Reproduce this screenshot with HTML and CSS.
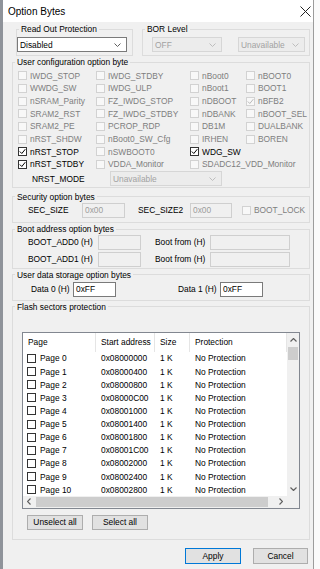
FILE: index.html
```html
<!DOCTYPE html>
<html lang="en">
<head>
  <meta charset="UTF-8" />
  <meta name="viewport" content="width=device-width, initial-scale=1" />
  <title>Option Bytes</title>
  <link rel="stylesheet" href="styles.css">
</head>
<body>
  <div class="screen">
    <div class="edge-left"></div>
    <div class="dialog">
      <div class="titlebar">
        <span class="title">Option Bytes</span>
        <svg class="close" width="11" height="11" viewBox="0 0 11 11">
          <path d="M0.5 0.5 L10.5 10.5 M10.5 0.5 L0.5 10.5" stroke="#222" stroke-width="1" fill="none" />
        </svg>
      </div>

      <div class="content">
        <div class="row-top">
          <fieldset class="grp grp-rop">
            <legend>Read Out Protection</legend>
            <div class="grp-body">
              <div class="combo w-rop">Disabled
                <svg class="chev" width="7" height="4" viewBox="0 0 7 4"><polyline points="0.5,0.5 3.5,3.5 6.5,0.5" /></svg>
              </div>
            </div>
          </fieldset>
          <fieldset class="grp grp-bor">
            <legend>BOR Level</legend>
            <div class="grp-body bor-body">
              <div class="combo off w-off">OFF
                <svg class="chev" width="7" height="4" viewBox="0 0 7 4"><polyline points="0.5,0.5 3.5,3.5 6.5,0.5" /></svg>
              </div>
              <div class="combo off w-unav">Unavailable
                <svg class="chev" width="7" height="4" viewBox="0 0 7 4"><polyline points="0.5,0.5 3.5,3.5 6.5,0.5" /></svg>
              </div>
            </div>
          </fieldset>
        </div>

        <fieldset class="grp grp-user">
          <legend>User configuration option byte</legend>
          <div class="grp-body user-body">
            <div class="opts">
              <div class="opt"><span class="cb"></span>IWDG_STOP</div>
              <div class="opt"><span class="cb"></span>IWDG_STDBY</div>
              <div class="opt"><span class="cb"></span>nBoot0</div>
              <div class="opt"><span class="cb"></span>nBOOT0</div>

              <div class="opt"><span class="cb"></span>WWDG_SW</div>
              <div class="opt"><span class="cb"></span>IWDG_ULP</div>
              <div class="opt"><span class="cb"></span>nBoot1</div>
              <div class="opt"><span class="cb"></span>BOOT1</div>

              <div class="opt"><span class="cb"></span>nSRAM_Parity</div>
              <div class="opt"><span class="cb"></span>FZ_IWDG_STOP</div>
              <div class="opt"><span class="cb"></span>nDBOOT</div>
              <div class="opt"><span class="cb dim"><svg width="7" height="7" viewBox="0 0 7 7"><polyline points="0.8,3.5 2.8,5.5 6.3,1.2" /></svg></span>nBFB2</div>

              <div class="opt"><span class="cb"></span>SRAM2_RST</div>
              <div class="opt"><span class="cb"></span>FZ_IWDG_STDBY</div>
              <div class="opt"><span class="cb"></span>nDBANK</div>
              <div class="opt"><span class="cb"></span>nBOOT_SEL</div>

              <div class="opt"><span class="cb"></span>SRAM2_PE</div>
              <div class="opt"><span class="cb"></span>PCROP_RDP</div>
              <div class="opt"><span class="cb"></span>DB1M</div>
              <div class="opt"><span class="cb"></span>DUALBANK</div>

              <div class="opt"><span class="cb"></span>nRST_SHDW</div>
              <div class="opt"><span class="cb"></span>nBoot0_SW_Cfg</div>
              <div class="opt"><span class="cb"></span>IRHEN</div>
              <div class="opt"><span class="cb"></span>BOREN</div>

              <div class="opt on"><span class="cb on"><svg width="7" height="7" viewBox="0 0 7 7"><polyline points="0.8,3.5 2.8,5.5 6.3,1.2" /></svg></span>nRST_STOP</div>
              <div class="opt"><span class="cb"></span>nSWBOOT0</div>
              <div class="opt on"><span class="cb on"><svg width="7" height="7" viewBox="0 0 7 7"><polyline points="0.8,3.5 2.8,5.5 6.3,1.2" /></svg></span>WDG_SW</div>
              <div class="opt"></div>

              <div class="opt on"><span class="cb on"><svg width="7" height="7" viewBox="0 0 7 7"><polyline points="0.8,3.5 2.8,5.5 6.3,1.2" /></svg></span>nRST_STDBY</div>
              <div class="opt"><span class="cb"></span>VDDA_Monitor</div>
              <div class="opt"><span class="cb"></span>SDADC12_VDD_Monitor</div>
              <div class="opt"></div>
            </div>
            <div class="nrst-row">
              <span class="nrst-label">NRST_MODE</span>
              <div class="combo off w-nrst">Unavailable
                <svg class="chev" width="7" height="4" viewBox="0 0 7 4"><polyline points="0.5,0.5 3.5,3.5 6.5,0.5" /></svg>
              </div>
            </div>
          </div>
        </fieldset>

        <fieldset class="grp grp-sec">
          <legend>Security option bytes</legend>
          <div class="grp-body sec-body">
            <span class="lbl w-sec">SEC_SIZE</span>
            <div class="field off w-43">0x00</div>
            <span class="lbl w-sec2">SEC_SIZE2</span>
            <div class="field off w-42">0x00</div>
            <div class="opt lock"><span class="cb"></span>BOOT_LOCK</div>
          </div>
        </fieldset>

        <fieldset class="grp grp-boot">
          <legend>Boot address option bytes</legend>
          <div class="grp-body boot-body">
            <div class="boot-row">
              <span class="lbl w-add">BOOT_ADD0 (H)</span>
              <div class="field off w-43"></div>
              <span class="lbl w-from">Boot from (H)</span>
              <div class="field off w-80"></div>
            </div>
            <div class="boot-row">
              <span class="lbl w-add">BOOT_ADD1 (H)</span>
              <div class="field off w-43"></div>
              <span class="lbl w-from">Boot from (H)</span>
              <div class="field off w-80"></div>
            </div>
          </div>
        </fieldset>

        <fieldset class="grp grp-data">
          <legend>User data storage option bytes</legend>
          <div class="grp-body data-body">
            <span class="lbl w-data">Data 0 (H)</span>
            <div class="field w-43">0xFF</div>
            <span class="lbl w-data gap-data">Data 1 (H)</span>
            <div class="field w-43">0xFF</div>
          </div>
        </fieldset>

        <fieldset class="grp grp-flash">
          <legend>Flash sectors protection</legend>
          <div class="grp-body flash-body">
            <div class="listview">
              <div class="lv-main">
                <div class="lv-head">
                  <div>Page</div>
                  <div>Start address</div>
                  <div>Size</div>
                  <div>Protection</div>
                </div>
                <div class="lv-rows">
                  <div class="lv-row"><div class="pg"><span class="cb on"></span>Page 0</div><div>0x08000000</div><div>1 K</div><div>No Protection</div></div>
                  <div class="lv-row"><div class="pg"><span class="cb on"></span>Page 1</div><div>0x08000400</div><div>1 K</div><div>No Protection</div></div>
                  <div class="lv-row"><div class="pg"><span class="cb on"></span>Page 2</div><div>0x08000800</div><div>1 K</div><div>No Protection</div></div>
                  <div class="lv-row"><div class="pg"><span class="cb on"></span>Page 3</div><div>0x08000C00</div><div>1 K</div><div>No Protection</div></div>
                  <div class="lv-row"><div class="pg"><span class="cb on"></span>Page 4</div><div>0x08001000</div><div>1 K</div><div>No Protection</div></div>
                  <div class="lv-row"><div class="pg"><span class="cb on"></span>Page 5</div><div>0x08001400</div><div>1 K</div><div>No Protection</div></div>
                  <div class="lv-row"><div class="pg"><span class="cb on"></span>Page 6</div><div>0x08001800</div><div>1 K</div><div>No Protection</div></div>
                  <div class="lv-row"><div class="pg"><span class="cb on"></span>Page 7</div><div>0x08001C00</div><div>1 K</div><div>No Protection</div></div>
                  <div class="lv-row"><div class="pg"><span class="cb on"></span>Page 8</div><div>0x08002000</div><div>1 K</div><div>No Protection</div></div>
                  <div class="lv-row"><div class="pg"><span class="cb on"></span>Page 9</div><div>0x08002400</div><div>1 K</div><div>No Protection</div></div>
                  <div class="lv-row"><div class="pg"><span class="cb on"></span>Page 10</div><div>0x08002800</div><div>1 K</div><div>No Protection</div></div>
                </div>
              </div>
              <div class="vscroll">
                <div class="sb-btn"><svg width="7" height="4" viewBox="0 0 7 4"><polyline points="0.5,3.5 3.5,0.5 6.5,3.5" /></svg></div>
                <div class="v-thumb"></div>
                <div class="sb-fill"></div>
                <div class="sb-btn"><svg width="7" height="4" viewBox="0 0 7 4"><polyline points="0.5,0.5 3.5,3.5 6.5,0.5" /></svg></div>
              </div>
              <div class="hscroll">
                <div class="sb-btn"><svg width="4" height="7" viewBox="0 0 4 7"><polyline points="3.5,0.5 0.5,3.5 3.5,6.5" /></svg></div>
                <div class="h-track"><div class="h-thumb"></div></div>
                <div class="sb-btn"><svg width="4" height="7" viewBox="0 0 4 7"><polyline points="0.5,0.5 3.5,3.5 0.5,6.5" /></svg></div>
              </div>
              <div class="sb-corner"></div>
            </div>
            <div class="sel-row">
              <div class="btn">Unselect all</div>
              <div class="btn">Select all</div>
            </div>
          </div>
        </fieldset>

        <div class="actions">
          <div class="btn btn-main default">Apply</div>
          <div class="btn btn-main">Cancel</div>
        </div>
      </div>
    </div>
    <div class="edge-right"></div>
  </div>
</body>
</html>
```

FILE: styles.css
```css
* {
  box-sizing: border-box;
}

html, body {
  margin: 0;
  padding: 0;
}

body {
  width: 320px;
  height: 569px;
  overflow: hidden;
  font-family: "Liberation Sans", Arial, sans-serif;
  font-size: 8.4px;
  color: #000;
  background: #f8f8f8;
}

.screen {
  display: flex;
  height: 569px;
}

.edge-left {
  width: 3px;
  background: #8f939a;
}

.dialog {
  width: 311px;
  background: #f0f0f0;
  border-right: 1px solid #9c9c9c;
  display: flex;
  flex-direction: column;
}

.edge-right {
  flex: 1;
  background: #fafafa;
}

/* title bar */
.titlebar {
  height: 22px;
  background: #fff;
  display: flex;
  align-items: center;
  padding-left: 5px;
}

.title {
  font-size: 10px;
}

.close {
  margin-left: auto;
  margin-right: 2px;
}

.content {
  padding: 2px 3px 0 9px;
}

/* group boxes */
.grp {
  margin: 0;
  padding: 0;
  border: 1px solid #dcdcdc;
  min-width: 0;
}

.grp legend {
  margin-left: 2px;
  padding: 0 2px;
  height: 10px;
  line-height: 10px;
  font-size: 8.4px;
}

.row-top {
  display: flex;
  gap: 9px;
  padding-left: 4px;
}

.grp-rop {
  width: 117px;
}

.grp-bor {
  width: 168px;
}

.grp-rop .grp-body {
  padding: 3px 0 3px 0;
}

.bor-body {
  display: flex;
  gap: 16px;
  padding: 3px 0 3px 9px;
}

/* combos and fields */
.combo {
  height: 15px;
  border: 1px solid #7a7a7a;
  background: #fff;
  display: flex;
  align-items: center;
  padding-left: 2px;
  white-space: nowrap;
}

.combo .chev {
  margin-left: auto;
  margin-right: 5px;
  fill: none;
  stroke: #606060;
  stroke-width: 1;
}

.combo.off {
  background: #ececec;
  border-color: #d6d6d6;
  color: #a2a2a2;
}

.combo.off .chev {
  stroke: #bdbdbd;
}

.w-rop { width: 110px; }
.w-off { width: 70px; }
.w-unav { width: 67px; }
.w-nrst { width: 112px; }

.field {
  height: 15px;
  border: 1px solid #7a7a7a;
  background: #fff;
  display: flex;
  align-items: center;
  padding-left: 2px;
}

.field.off {
  background: #f0f0f0;
  border-color: #cfcfcf;
  color: #9c9c9c;
}

.w-42 { width: 42px; }
.w-43 { width: 43px; }
.w-80 { width: 80px; }

.lbl {
  white-space: nowrap;
}

/* user configuration */
.grp-user {
  margin-top: 1px;
}

.user-body {
  padding: 2.3px 0 1px 5px;
}

.opts {
  display: grid;
  grid-template-columns: 78px 94px 56px 1fr;
  grid-auto-rows: 12.7px;
}

.opt {
  display: flex;
  align-items: center;
  gap: 3px;
  white-space: nowrap;
  color: #7e7e7e;
}

.opt.on {
  color: #000;
}

.cb {
  width: 9px;
  height: 9px;
  flex: none;
  border: 1px solid #d2d2d2;
  background: #f8f8f8;
  display: flex;
  align-items: center;
  justify-content: center;
}

.cb svg {
  fill: none;
  stroke: #000;
  stroke-width: 1;
}

.cb.on {
  border-color: #333;
  background: #fff;
}

.cb.dim svg {
  stroke: #b8b8b8;
}

.nrst-row {
  display: flex;
  align-items: center;
  height: 14px;
  margin-top: 1px;
  padding-left: 14px;
}

.nrst-label {
  width: 78px;
}

/* security */
.grp-sec {
  margin-top: 4px;
}

.sec-body {
  display: flex;
  align-items: center;
  padding: 1px 0 4px 15px;
}

.w-sec { width: 54px; }

.w-sec2 {
  width: 52px;
  margin-left: 13px;
}

.lock {
  margin-left: 10px;
}

/* boot address */
.grp-boot {
  margin-top: 1.5px;
}

.boot-body {
  display: flex;
  flex-direction: column;
  gap: 2px;
  padding: 0.5px 0 1px 15px;
}

.boot-row {
  display: flex;
  align-items: center;
}

.w-add { width: 70px; }

.w-from {
  width: 55px;
  margin-left: 14px;
}

/* user data */
.grp-data {
  margin-top: 1px;
}

.data-body {
  display: flex;
  align-items: center;
  padding: 2px 0 3px 18px;
}

.w-data { width: 42px; }

.gap-data {
  margin-left: 62px;
}

/* flash list */
.grp-flash {
  margin-top: 1px;
}

.flash-body {
  padding: 20px 0 9px 9px;
}

.listview {
  width: 278px;
  height: 177px;
  border: 1px solid #828790;
  background: #fff;
  display: grid;
  grid-template-columns: 264px 12px;
  grid-template-rows: 163px 12px;
}

.lv-main {
  overflow: hidden;
}

.lv-head,
.lv-row {
  display: grid;
  grid-template-columns: 73px 59px 35px 97px;
}

.lv-head {
  height: 19px;
}

.lv-head div {
  line-height: 19px;
  padding-left: 5px;
  border-right: 1px solid #e5e5e5;
  white-space: nowrap;
}

.lv-rows {
  height: 144px;
  overflow: hidden;
}

.lv-row {
  height: 13.15px;
  align-items: center;
}

.lv-row div {
  padding-left: 5px;
  white-space: nowrap;
}

.lv-row .pg {
  display: flex;
  align-items: center;
  gap: 4.5px;
  padding-left: 3.5px;
}

.vscroll {
  display: flex;
  flex-direction: column;
  background: #f0f0f0;
}

.sb-btn {
  width: 12px;
  height: 13px;
  display: flex;
  align-items: center;
  justify-content: center;
  flex: none;
}

.vscroll .sb-btn:first-child {
  height: 14px;
}

.sb-btn svg {
  fill: none;
  stroke: #606060;
  stroke-width: 1.2;
}

.v-thumb {
  height: 13px;
  margin: 0 1px;
  background: #cdcdcd;
}

.sb-fill {
  flex: 1;
}

.hscroll {
  display: flex;
  background: #f0f0f0;
}

.hscroll .sb-btn {
  height: 12px;
}

.h-track {
  flex: 1;
  display: flex;
  align-items: center;
}

.h-thumb {
  width: 232px;
  height: 10px;
  margin-left: 1px;
  background: #cdcdcd;
}

.sb-corner {
  background: #f0f0f0;
}

/* buttons */
.sel-row {
  display: flex;
  gap: 9px;
  margin-top: 6px;
  padding-left: 5px;
}

.btn {
  width: 56px;
  height: 15px;
  background: #e1e1e1;
  border: 1px solid #adadad;
  display: flex;
  align-items: center;
  justify-content: center;
  white-space: nowrap;
}

.actions {
  display: flex;
  justify-content: flex-end;
  gap: 12px;
  margin-top: 8px;
  padding-right: 2px;
}

.btn-main {
  height: 16px;
}

.btn-main + .btn-main {
  width: 55px;
}

.btn.default {
  border-color: #0078d7;
}
```
